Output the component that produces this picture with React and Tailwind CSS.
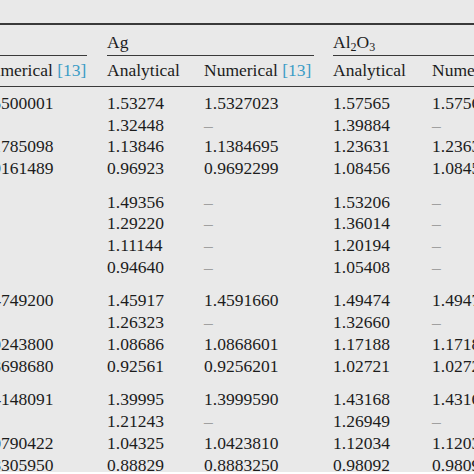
const groups = [
  [
    ["1.5500001", "1.53274", "1.5327023", "1.57565", "1.5756412"],
    ["–", "1.32448", "–", "1.39884", "–"],
    ["1.1785098", "1.13846", "1.1384695", "1.23631", "1.2363108"],
    ["0.9161489", "0.96923", "0.9692299", "1.08456", "1.0845512"],
  ],
  [
    ["–", "1.49356", "–", "1.53206", "–"],
    ["–", "1.29220", "–", "1.36014", "–"],
    ["–", "1.11144", "–", "1.20194", "–"],
    ["–", "0.94640", "–", "1.05408", "–"],
  ],
  [
    ["1.4749200", "1.45917", "1.4591660", "1.49474", "1.4947390"],
    ["–", "1.26323", "–", "1.32660", "–"],
    ["1.0243800", "1.08686", "1.0868601", "1.17188", "1.1718740"],
    ["0.8698680", "0.92561", "0.9256201", "1.02721", "1.0272011"],
  ],
  [
    ["1.4148091", "1.39995", "1.3999590", "1.43168", "1.4316722"],
    ["–", "1.21243", "–", "1.26949", "–"],
    ["1.0790422", "1.04325", "1.0423810", "1.12034", "1.1203390"],
    ["0.8305950", "0.88829", "0.8883250", "0.98092", "0.9809170"],
  ],
]

const widths = ["w-[128px]", "w-[97px]", "w-[129px]", "w-[99px]", "w-[120px]"]

const Cell = ({ value, i }) => (
  <div className={`${widths[i]} shrink-0 whitespace-nowrap`}>
    {value === "–" ? <span className="text-[#a0a0a0]">–</span> : value}
  </div>
)

const Ref = () => <span className="text-[#3b9cc6]">[13]</span>

const App = () => {
  return (
    <div className="w-[474px] h-[474px] bg-white overflow-hidden">
      <div
        className="h-[472px] bg-[#e9e9e9] overflow-hidden text-[#1c1c1c] text-[17.5px] leading-[22px]"
        style={{ fontFamily: '"Liberation Serif", "Times New Roman", serif' }}
      >
        <div className="pt-[23px]">
          <div className="h-[1.5px] bg-[#3a3a3a]" />
        </div>

        <div className="ml-[-21px]">
          {/* material row */}
          <div className="flex mt-[6px] h-[22px]">
            <div className="w-[128px] shrink-0" />
            <div className="w-[226px] shrink-0">Ag</div>
            <div className="w-[219px] shrink-0">
              Al<sub className="text-[12px]">2</sub>O<sub className="text-[12px]">3</sub>
            </div>
          </div>
          <div className="flex mt-[2px]">
            <div className="w-[108px] h-[1.3px] bg-[#3a3a3a] shrink-0" />
            <div className="w-[20px] shrink-0" />
            <div className="w-[207px] h-[1.3px] bg-[#3a3a3a] shrink-0" />
            <div className="w-[19px] shrink-0" />
            <div className="w-[200px] h-[1.3px] bg-[#3a3a3a] shrink-0" />
          </div>

          {/* header row */}
          <div className="flex mt-[3.5px] h-[22px]">
            <div className="w-[128px] shrink-0 whitespace-nowrap">Numerical <Ref /></div>
            <div className="w-[97px] shrink-0">Analytical</div>
            <div className="w-[129px] shrink-0 whitespace-nowrap">Numerical <Ref /></div>
            <div className="w-[99px] shrink-0">Analytical</div>
            <div className="w-[120px] shrink-0 whitespace-nowrap">Numerical <Ref /></div>
          </div>
        </div>
        <div className="mt-[4.5px] h-[1.5px] bg-[#3a3a3a]" />

        <div className="ml-[-21px] mt-[4.5px] flex flex-col gap-[11.5px]">
          {groups.map((rows, g) => (
            <div key={g} className="flex flex-col">
              {rows.map((row, r) => (
                <div key={r} className="flex h-[21.85px] items-center">
                  {row.map((v, i) => (
                    <Cell key={i} value={v} i={i} />
                  ))}
                </div>
              ))}
            </div>
          ))}
        </div>
      </div>
    </div>
  )
}

export default App
